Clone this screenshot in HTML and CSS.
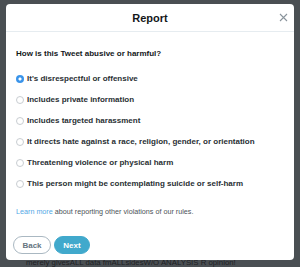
FILE: index.html
```html
<!DOCTYPE html>
<html lang="en">
<head>
    <meta charset="UTF-8">
    <title>Report</title>
    <link rel="stylesheet" href="styles.css">
</head>
<body>
    <div class="backdrop-text">merely givesALL data fmALLsidesW/O ANALYSIS R opinion!</div>

    <div class="modal">
        <div class="modal-header">
            <h1>Report</h1>
            <button class="close-button">
                <svg width="9" height="9" viewBox="0 0 9 9"><path d="M1 1L8 8M8 1L1 8" stroke="#8a949c" stroke-width="1.1"/></svg>
            </button>
        </div>

        <div class="modal-body">
            <h2>How is this Tweet abusive or harmful?</h2>

            <ul class="options">
                <li><span class="radio checked"></span>It's disrespectful or offensive</li>
                <li><span class="radio"></span>Includes private information</li>
                <li><span class="radio"></span>Includes targeted harassment</li>
                <li><span class="radio"></span>It directs hate against a race, religion, gender, or orientation</li>
                <li><span class="radio"></span>Threatening violence or physical harm</li>
                <li><span class="radio"></span>This person might be contemplating suicide or self-harm</li>
            </ul>

            <p class="learn"><a href="#">Learn more</a> about reporting other violations of our rules.</p>

            <div class="actions">
                <button class="btn back">Back</button>
                <button class="btn next">Next</button>
            </div>
        </div>
    </div>
</body>
</html>
```

FILE: styles.css
```css
* {
    margin: 0;
    padding: 0;
    box-sizing: border-box;
    font-family: "Liberation Sans", Arial, sans-serif;
}

html, body {
    width: 300px;
    height: 267px;
    overflow: hidden;
}

body {
    background: #4a4f53;
    position: relative;
}

/* text of the page behind the dialog */
.backdrop-text {
    position: absolute;
    left: 26px;
    top: 258px;
    font-size: 7.8px;
    color: #1e2124;
    white-space: nowrap;
}

.modal {
    position: absolute;
    left: 6px;
    top: 4px;
    width: 288px;
    height: 256px;
    background: #fff;
    border-radius: 4px;
}

.modal-header {
    height: 28px;
    border-bottom: 1px solid #e6ecf0;
    display: flex;
    align-items: center;
    justify-content: center;
    position: relative;
}

.modal-header h1 {
    font-size: 11px;
    font-weight: bold;
    color: #14171a;
}

.close-button {
    position: absolute;
    right: 5px;
    top: 7px;
    background: none;
    border: none;
    width: 12px;
    height: 12px;
    display: flex;
    align-items: center;
    justify-content: center;
}

.modal-body {
    padding: 17px 10px 0 10px;
}

.modal-body h2 {
    font-size: 8px;
    font-weight: bold;
    color: #14171a;
    margin-bottom: 10px;
}

.options {
    list-style: none;
}

.options li {
    display: flex;
    align-items: center;
    height: 21px;
    font-size: 8px;
    font-weight: bold;
    color: #292f33;
}

.radio {
    width: 8px;
    height: 8px;
    border: 1px solid #c8cdd1;
    border-radius: 50%;
    margin: 0 3px 0 0;
    flex-shrink: 0;
}

.radio.checked {
    border: none;
    background: radial-gradient(circle, #fff 0 1.3px, #3a94ea 1.8px);
}

.learn {
    margin-top: 13px;
    font-size: 7.2px;
    color: #4c5358;
}

.learn a {
    color: #53a8e6;
    text-decoration: none;
}

.actions {
    display: flex;
    gap: 3px;
    margin: 20px 0 0 -3px;
}

.btn {
    height: 18px;
    border-radius: 9px;
    font-size: 8px;
    font-weight: bold;
    padding: 0;
}

.back {
    width: 38px;
    background: #fff;
    border: 1px solid #aab8c2;
    color: #66757f;
}

.next {
    width: 36px;
    background: #41a9cc;
    border: 1px solid #41a9cc;
    color: #fff;
}
```
